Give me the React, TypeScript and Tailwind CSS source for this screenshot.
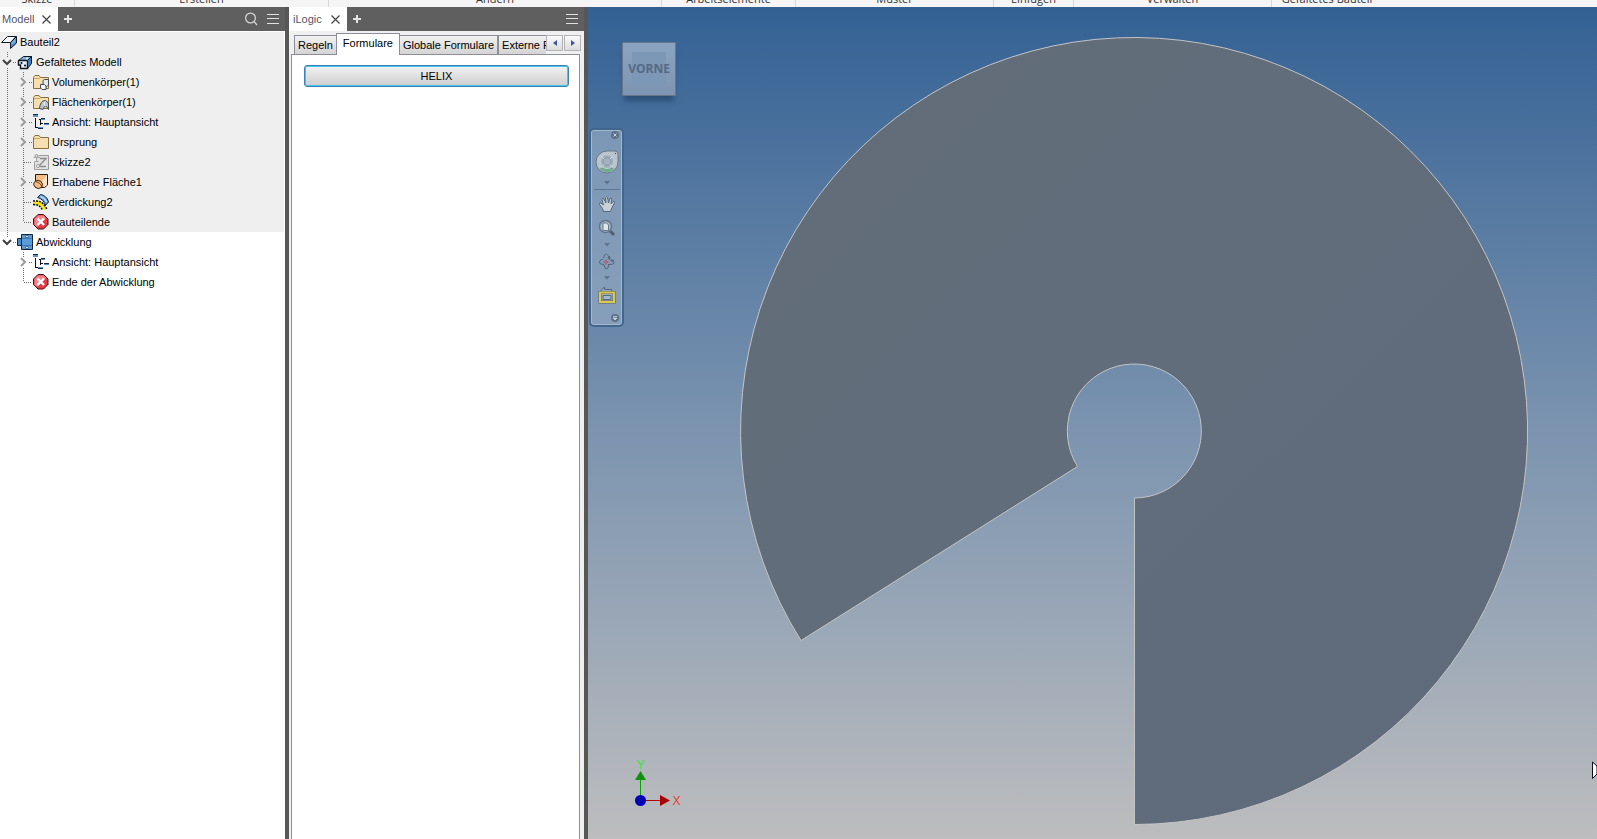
import React, { useState } from 'react';

type IconName =
  | 'part'
  | 'folded'
  | 'solids'
  | 'surfaces'
  | 'view'
  | 'folder'
  | 'sketch'
  | 'emboss'
  | 'thicken'
  | 'end'
  | 'flat';

interface TreeNode {
  id: string;
  label: string;
  icon: IconName;
  depth: number;
  toggle?: 'open' | 'closed';
  last?: boolean;
  trunk?: boolean;
}

const foldedNodes: TreeNode[] = [
  { id: 'part', label: 'Bauteil2', icon: 'part', depth: 0 },
  { id: 'folded', label: 'Gefaltetes Modell', icon: 'folded', depth: 1, toggle: 'open' },
  { id: 'solids', label: 'Volumenkörper(1)', icon: 'solids', depth: 2, toggle: 'closed', trunk: true },
  { id: 'surfaces', label: 'Flächenkörper(1)', icon: 'surfaces', depth: 2, toggle: 'closed', trunk: true },
  { id: 'view', label: 'Ansicht: Hauptansicht', icon: 'view', depth: 2, toggle: 'closed', trunk: true },
  { id: 'origin', label: 'Ursprung', icon: 'folder', depth: 2, toggle: 'closed', trunk: true },
  { id: 'sketch', label: 'Skizze2', icon: 'sketch', depth: 2, trunk: true },
  { id: 'emboss', label: 'Erhabene Fläche1', icon: 'emboss', depth: 2, toggle: 'closed', trunk: true },
  { id: 'thicken', label: 'Verdickung2', icon: 'thicken', depth: 2, trunk: true },
  { id: 'end', label: 'Bauteilende', icon: 'end', depth: 2, last: true, trunk: true },
];

const flatNodes: TreeNode[] = [
  { id: 'flat', label: 'Abwicklung', icon: 'flat', depth: 1, toggle: 'open', last: true },
  { id: 'flat-view', label: 'Ansicht: Hauptansicht', icon: 'view', depth: 2, toggle: 'closed' },
  { id: 'flat-end', label: 'Ende der Abwicklung', icon: 'end', depth: 2, last: true },
];

const ribbonGroups = [
  { label: 'Skizze', width: 'w-[75px]' },
  { label: 'Erstellen', width: 'w-[254px]' },
  { label: 'Ändern', width: 'w-[333px]' },
  { label: 'Arbeitselemente', width: 'w-[134px]' },
  { label: 'Muster', width: 'w-[198px]' },
  { label: 'Einfügen', width: 'w-[80px]' },
  { label: 'Verwalten', width: 'w-[198px]' },
  { label: 'Gefaltetes Bauteil', width: 'w-[110px]' },
];

const tabs = ['Regeln', 'Formulare', 'Globale Formulare', 'Externe Regeln'];

function Folder() {
  return (
    <>
      <path d="M.5 14.500V3.500L2 1.500H6L7.500 3.500H15.500V14.500Z" fill="#f6dfae" stroke="#8a6d3f" />
      <path d="M1 4.500H7" stroke="#c9a86c" fill="none" />
    </>
  );
}

function TreeIcon({ name }: { name: IconName }) {
  return (
    <svg width="16" height="16" viewBox="0 0 16 16" className="shrink-0" fill="none">
      {name === 'part' && (
        <>
          <path d="M.5 8.500 6.500 2.500H15L9.500 8.500Z" fill="#f4f8fc" stroke="#111c2c" />
          <path d="M15.500 2.500V9L9.500 14.500V8.500Z" fill="#4b86c4" stroke="#111c2c" />
          <path d="M10.500 8.500 14.500 4.500V7.500L10.500 11.500Z" fill="#7db0e2" />
        </>
      )}
      {name === 'folded' && (
        <>
          <path d="M1.500 6.500 6.500 2.500H14.500L10.500 6.500Z" fill="#7fb2e4" stroke="#101820" />
          <path d="M1.500 6.500H10.500V14.500H3.500V11H1.500Z" fill="#e6f0fa" stroke="#101820" strokeWidth="1.400" />
          <path d="M10.500 6.500 14.500 2.500V9.500L10.500 14.500Z" fill="#3f7dbd" stroke="#101820" />
          <circle cx="4.500" cy="9" r="1.100" fill="#101820" />
          <circle cx="8" cy="11.500" r="1.100" fill="#101820" />
          <circle cx="10" cy="4.500" r="1" fill="#fff" />
        </>
      )}
      {name === 'solids' && (
        <>
          <Folder />
          <path d="M10 6.500 11.500 5.500H15.500V11L14 12.500H10Z" fill="#e4e9f0" stroke="#444c5a" />
          <path d="M7.500 10.500H11.500L13 12V15.500H9L7.500 14Z" fill="#f7f8fa" stroke="#444c5a" />
        </>
      )}
      {name === 'surfaces' && (
        <>
          <Folder />
          <path d="M6.500 14.500C7 10 8.500 6.500 12.500 6.500L15.500 9V15.500L13.500 12.500C11.500 12 10.500 13.500 10 15.500Z" fill="#bcc4d0" stroke="#444c5a" />
          <path d="M12.500 7.500C10.500 9 11 11 12.500 12" stroke="#fff" />
        </>
      )}
      {name === 'view' && (
        <g shapeRendering="crispEdges">
          <path d="M2.500 4V13.500H5M7.500 5V10.500M6 5.500H11M7.500 9.500H10" stroke="#111" />
          <path d="M0 1H5V3H0ZM8 4H12V6H8ZM11 9H16V11H11ZM5 13H10V15H5Z" fill="#5790cb" />
          <path d="M0 .5H5M8 4.500H12M11 9.500H16M5 14.500H10" stroke="#162c48" />
        </g>
      )}
      {name === 'folder' && <Folder />}
      {name === 'sketch' && (
        <>
          <path d="M5.500 1.500H15.500V15.500H1.500V8" fill="#e2e2e2" stroke="#9b9b9b" />
          <path d="M7 4.500H13L5.500 12.500H13" stroke="#8d8d8d" strokeWidth="1.400" />
          <path d="M3.500 0V7M.5 3.500H7M1.500 7.500H5.500" stroke="#a7a7a7" />
          <circle cx="3.500" cy="2" r="1.500" fill="#ddd" stroke="#999" />
          <circle cx="5" cy="12" r="1.500" fill="#fff" stroke="#999" />
        </>
      )}
      {name === 'emboss' && (
        <>
          <path d="M2.500 .5H14.500V11L11.500 13.500H2.500Z" fill="#f9bd83" stroke="#2a1a0c" />
          <path d="M9 7 14 1V11L11 13Z" fill="#fde3c6" />
          <path d="M1 8.500Q4 5 7.500 7Q11 10 8.500 13.500Q5 16 2 13Q0 11 1 8.500Z" fill="#f6b982" stroke="#3b2816" />
          <path d="M2 7.500C5.500 8 8 10 9 13" stroke="#6a4122" />
        </>
      )}
      {name === 'thicken' && (
        <>
          <path d="M0 6.500H4.500C9 7.500 12.500 11 14 15.500H9.500C8.500 12.500 6 10.500 0 10.500Z" fill="#f6e21d" />
          <path d="M0 7H4C9 7.500 12.500 11.500 14 15.500M0 10.500C5 10.500 8 12.500 9 15.500" stroke="#111" strokeDasharray="2 1" strokeWidth="1.500" />
          <path d="M4.500 3.500 7.500 .5C11 1 14.500 3.500 15.500 8L12.500 11.500C11.500 7.500 8.500 4.500 4.500 3.500Z" fill="#5d98d6" stroke="#14283f" />
          <path d="M7.500 2.500C10.500 3.500 12.500 5.500 13.500 8.500" stroke="#c6e1fa" strokeWidth="1.500" />
        </>
      )}
      {name === 'end' && (
        <>
          <path d="M5 .5H10.500L15 5V10.500L10.500 15H5L.5 10.500V5Z" fill="#e23b43" stroke="#4a0d12" />
          <path d="M5 1.500H10.500L13 4 4 13 1.500 10.500V5Z" fill="#f5848a" />
          <path d="M4.500 4.500 11 11M11 4.500 4.500 11" stroke="#fff" strokeWidth="2.400" />
        </>
      )}
      {name === 'flat' && (
        <>
          <path d="M.5 4.500H5V11.500H.5Z" fill="#4a8aca" stroke="#10243c" />
          <path d="M4.500 .5H15.500V15.500H4.500Z" fill="#5b9bd9" stroke="#10243c" />
          <path d="M5 4.500H15M5 11.500H15" stroke="#3d77b2" />
          <ellipse cx="10" cy="2.500" rx="1.500" ry="1" fill="#fff" stroke="#10243c" strokeWidth=".6" />
          <ellipse cx="10" cy="13.500" rx="1.500" ry="1" fill="#fff" stroke="#10243c" strokeWidth=".6" />
        </>
      )}
    </svg>
  );
}

interface GuideProps {
  up?: boolean;
  down?: boolean;
  stub?: boolean;
  toggle?: 'open' | 'closed';
}

function Guide({ up, down, stub, toggle }: GuideProps) {
  return (
    <svg width="16" height="20" viewBox="0 0 16 20" fill="none" className="block shrink-0">
      <g stroke="#6e6e6e" strokeDasharray="1 1" shapeRendering="crispEdges">
        {up && <path d={toggle ? 'M6.500 0V5' : 'M6.500 0V10'} />}
        {down && <path d={toggle ? 'M6.500 16V20' : 'M6.500 10V20'} />}
        {stub && <path d={toggle ? 'M12 10.500H15' : 'M7 10.500H15'} />}
      </g>
      {toggle === 'open' && <path d="M2 8 6 12 10 8" stroke="#404040" strokeWidth="2" />}
      {toggle === 'closed' && <path d="M4 6 8 10 4 14" stroke="#9b9b9b" strokeWidth="2" />}
    </svg>
  );
}

function TreeRow({ node }: { node: TreeNode }) {
  const guide = <Guide up down={!node.last} stub toggle={node.toggle} />;
  return (
    <li role="treeitem" className="flex h-5 items-center pl-px whitespace-nowrap">
      {node.depth === 2 && <Guide up={node.trunk} down={node.trunk} />}
      {node.depth > 0 &&
        (node.toggle ? (
          <button type="button" aria-label={`${node.label} umschalten`}>
            {guide}
          </button>
        ) : (
          guide
        ))}
      <TreeIcon name={node.icon} />
      <span className="pl-[3px]">{node.label}</span>
    </li>
  );
}

function PanelHeader({ title, search }: { title: string; search?: boolean }) {
  return (
    <div className="flex h-6 shrink-0 items-stretch bg-[#5f5f5f]">
      <div className={`flex items-center bg-white pr-[6px] text-[#555568] ${search ? 'gap-[7px] pl-[2px]' : 'gap-2 pl-1'}`}>
        <span>{title}</span>
        <button type="button" aria-label={`${title} schließen`}>
          <svg width="11" height="11" viewBox="0 0 11 11" stroke="#444" strokeWidth="1.200">
            <path d="M1.500 1.500 9.500 9.500M9.500 1.500 1.500 9.500" />
          </svg>
        </button>
      </div>
      <button type="button" aria-label="Hinzufügen" className="px-[6px]">
        <svg width="8" height="8" viewBox="0 0 8 8" stroke="#e4e4e4" strokeWidth="2">
          <path d="M4 0V8M0 4H8" />
        </svg>
      </button>
      <div className="ml-auto flex items-center gap-[9px] pr-[6px]">
        {search && (
          <button type="button" aria-label="Suchen">
            <svg width="14" height="14" viewBox="0 0 14 14" fill="none" stroke="#d8d8d8" strokeWidth="1.200">
              <circle cx="6.500" cy="6" r="4.900" />
              <path d="M10 9.500 13 13" />
            </svg>
          </button>
        )}
        <button type="button" aria-label="Menü">
          <svg width="12" height="10" viewBox="0 0 12 10" stroke="#e0e0e0" shapeRendering="crispEdges">
            <path d="M0 .5H12M0 4.500H12M0 9.500H12" />
          </svg>
        </button>
      </div>
    </div>
  );
}

function ModelPanel() {
  return (
    <aside className="flex w-[289px] shrink-0 flex-col border-r-4 border-[#575757] bg-white">
      <PanelHeader title="Modell" search />
      <ul role="tree" className="mt-px mr-px bg-[#efefef]">
        {foldedNodes.map((node) => (
          <TreeRow key={node.id} node={node} />
        ))}
      </ul>
      <ul role="tree">
        {flatNodes.map((node) => (
          <TreeRow key={node.id} node={node} />
        ))}
      </ul>
    </aside>
  );
}

function LogicPanel() {
  const [activeTab, setActiveTab] = useState('Formulare');

  return (
    <aside className="flex w-[299px] shrink-0 flex-col border-r-4 border-[#575757] bg-[#f0f0f0]">
      <PanelHeader title="iLogic" />
      <div className="flex min-h-0 flex-1 flex-col px-[2px] pt-[2px]">
        <div className="flex h-[21px] items-end">
          <div role="tablist" className="-mb-px flex h-[22px] min-w-0 flex-1 items-end overflow-hidden pb-px pl-[3px] whitespace-nowrap">
            {tabs.map((tab) => (
              <button
                key={tab}
                type="button"
                role="tab"
                aria-selected={activeTab === tab}
                onClick={() => setActiveTab(tab)}
                className={
                  activeTab === tab
                    ? 'relative z-10 -mx-px -mb-px h-[22px] shrink-0 border border-b-0 border-[#8c8e99] bg-white px-[6px] pb-1'
                    : 'h-[19px] shrink-0 border border-b-0 border-[#8c8e99] bg-linear-to-b from-[#f2f2f2] to-[#d4d4d4] px-[3px]'
                }
              >
                {tab}
              </button>
            ))}
          </div>
          <div className="flex h-[19px] gap-px pr-px">
            <button type="button" aria-label="Zurück" className="flex h-4 w-[17px] items-center justify-center border border-[#b4b4b8] bg-linear-to-b from-[#fafafa] to-[#dcdcdc]">
              <svg width="4" height="6" viewBox="0 0 4 6" fill="#3f55a0">
                <path d="M4 0V6L0 3Z" />
              </svg>
            </button>
            <button type="button" aria-label="Weiter" className="flex h-4 w-[17px] items-center justify-center border border-[#b4b4b8] bg-linear-to-b from-[#fafafa] to-[#dcdcdc]">
              <svg width="4" height="6" viewBox="0 0 4 6" fill="#3f55a0">
                <path d="M0 0V6L4 3Z" />
              </svg>
            </button>
          </div>
        </div>
        <div className="mr-[2px] flex-1 border border-b-0 border-[#8c8e99] bg-white px-3 pt-[10px] pr-[10px]">
          <button
            type="button"
            className="h-[22px] w-full rounded-[3px] border border-[#3c7fb1] bg-linear-to-b from-[#f3f3f3] to-[#cecece] text-black inset-ring inset-ring-[#46c5ee]"
          >
            HELIX
          </button>
        </div>
      </div>
    </aside>
  );
}

function DropArrow() {
  return (
    <svg width="6" height="4" viewBox="0 0 6 4" fill="#5f7489">
      <path d="M0 0H6L3 3.500Z" />
    </svg>
  );
}

function NavigationBar() {
  return (
    <div className="absolute top-[121px] left-px flex w-[35px] flex-col items-center rounded-[5px] border-2 border-[#41678f] bg-[#93a8c0]/70 inset-ring inset-ring-[#a3b8ce]">
      <button type="button" aria-label="Navigationsleiste schließen" className="mt-[1px] self-end pr-[3px]">
        <svg width="8" height="8" viewBox="0 0 8 8">
          <circle cx="4" cy="4" r="4" fill="#5c7288" />
          <path d="M2.500 2.500 5.500 5.500M5.500 2.500 2.500 5.500" stroke="#c5d2de" />
        </svg>
      </button>
      <button type="button" aria-label="Navigationsrad" className="mt-[11px]">
        <svg width="24" height="24" viewBox="0 0 24 24" fill="none">
          <path d="M12 1H20Q23 1 23 4V12A11 11 0 1 1 12 1Z" fill="#b9c4cd" stroke="#68798c" />
          <path d="M4.500 18.500Q12 15 19.500 18.500Q12 26 4.500 18.500Z" fill="#6fae8c" />
          <circle cx="12" cy="11.500" r="7" fill="#a3b2bf" stroke="#c4ced6" />
          <circle cx="12" cy="11.500" r="4" stroke="#8797a8" />
          <path d="M6.500 6.500 9 9M17.500 6.500 15 9M6.500 17 9 14.500M17.500 17 15 14.500" stroke="#d0d8df" />
          <path d="M20 3H21V4H20Z" fill="#34495e" />
        </svg>
      </button>
      <button type="button" aria-label="Radoptionen" className="mt-[7px] h-1">
        <DropArrow />
      </button>
      <hr className="mt-1 w-[26px] border-[#5d7894]" />
      <button type="button" aria-label="Pan" className="mt-[5px]">
        <svg width="18" height="18" viewBox="0 0 18 18">
          <path d="M5.500 16.500 4.500 13.500 1.500 9.500Q1 7.500 3 8L5.500 10 4 4.500Q4.200 2.800 5.700 3.700L8 8 7.500 2.500Q8.300 .8 9.500 2.500L10.500 8 12 3.500Q13.500 2.500 13.700 4.200L13 9 15 6.500Q16.700 6 16.500 7.800L14 12.500 12.500 16.500Z" fill="#c9d1d8" stroke="#52677c" />
        </svg>
      </button>
      <button type="button" aria-label="Zoom" className="mt-[6px]">
        <svg width="18" height="18" viewBox="0 0 18 18" fill="none">
          <path d="M11 11 16 16" stroke="#53616e" strokeWidth="3" />
          <circle cx="7.500" cy="7.500" r="6" fill="#a7b9ca" stroke="#61758a" strokeWidth="1.500" />
          <path d="M5 4H8.500L10.500 6V11.500H5Z" fill="#e1e6ea" stroke="#62768b" />
        </svg>
      </button>
      <button type="button" aria-label="Zoomoptionen" className="mt-[6px] h-1">
        <DropArrow />
      </button>
      <button type="button" aria-label="Orbit" className="mt-[6px]">
        <svg width="18" height="18" viewBox="0 0 18 18" fill="none" stroke="#53687e">
          <path d="M5 6.500H3.500Q1 7.500 1.500 10Q2.500 11.500 6 11.500M13 7Q16.500 8 16 10Q15 12 10 11.500" />
          <path d="M5.500 5Q6 1 8.500 1Q11 2 11 6M6 12Q7 16.500 9 16Q10.500 15.500 10.500 12" />
          <path d="M11.500 3V7M9.500 5H13M14 6V9M12.500 7.500H16" />
          <path d="M8 6.500V11.500M5.500 9H10.500" stroke="#c23a4e" strokeDasharray="2 1" />
        </svg>
      </button>
      <button type="button" aria-label="Orbitoptionen" className="mt-[5px] h-1">
        <DropArrow />
      </button>
      <button type="button" aria-label="Ausrichten nach" className="mt-[6px]">
        <svg width="18" height="18" viewBox="0 0 18 18" fill="none">
          <path d="M2 5.500 6.500 1V3.500H13.500V5.500" fill="#9eb1c2" stroke="#4e6378" />
          <path d="M2 6.500H16V16H2Z" fill="#9fb2c4" stroke="#63624d" strokeWidth="3" />
          <path d="M2 6.500H16V16H2Z" stroke="#d9c955" strokeWidth="2" />
          <path d="M5 9.500H13V13.500H5Z" fill="#a8b9c9" stroke="#55697c" />
        </svg>
      </button>
      <button type="button" aria-label="Leiste anpassen" className="mt-[10px] mb-[3px] self-end pr-[3px]">
        <svg width="8" height="8" viewBox="0 0 8 8">
          <circle cx="4" cy="4" r="4" fill="#5c7288" />
          <path d="M2 2.500H6M2 4H6L4 6Z" stroke="#c5d2de" strokeWidth=".8" fill="#c5d2de" />
        </svg>
      </button>
    </div>
  );
}

function Viewport() {
  return (
    <main className="relative min-w-0 flex-1 overflow-hidden bg-linear-to-b from-[#336194] via-[#7a93af] to-[#bdbdbe]">
      <svg viewBox="0 0 1009 832" className="absolute inset-0 h-full w-full" fill="none">
        <defs>
          <linearGradient id="sheet" x1="0" y1="0" x2="1" y2="1">
            <stop offset="0" stopColor="#636d79" />
            <stop offset=".5" stopColor="#616d7b" />
            <stop offset="1" stopColor="#5f6a7b" />
          </linearGradient>
        </defs>
        <path
          d="M546.500 817.500A393.500 393.500 0 1 0 213 633.500L489.500 459.500A67 67 0 1 1 546.500 491Z"
          fill="url(#sheet)"
          stroke="#c4c4c4"
        />
        <g transform="translate(52 793)">
          <path d="M.5 0V-25" stroke="#00a800" />
          <path d="M.5-29 6-20H-5Z" fill="#109010" />
          <path d="M0 .5H22" stroke="#b00000" />
          <path d="M20-5V6L30 .5Z" fill="#a80000" />
          <circle cx="0.500" cy="0.500" r="5.500" fill="#0000c0" />
          <path d="M-1.500-1.500H2L-1.500 2.500H2" stroke="#000070" />
        </g>
        <g fontFamily="Liberation Sans, sans-serif" fontSize="12" textAnchor="middle">
          <text x="52.500" y="762" fill="#33e833">Y</text>
          <text x="88.500" y="798" fill="#ec3a3a">X</text>
        </g>
        <path d="M1004.500 755V771.500L1009 767V759Z" fill="#fff" stroke="#0a0a1e" />
      </svg>
      <button
        type="button"
        className="absolute top-[35px] left-[34px] flex h-[54px] w-[54px] items-center justify-center border border-[#67768a] bg-linear-to-b from-[#8aa4c2] to-[#7d95b0] shadow-[0_7px_5px_-2px_#2c5078]"
      >
        <span className="flex h-[34px] w-[34px] items-center justify-center bg-[#7d97b6] font-['Open_Sans',sans-serif] text-xs font-bold text-[#566a83]">
          VORNE
        </span>
      </button>
      <NavigationBar />
    </main>
  );
}

export default function App() {
  return (
    <div className="flex h-screen flex-col overflow-hidden bg-white font-['Liberation_Sans',Arial,sans-serif] text-[11px] leading-4 text-black">
      <header className="flex h-[7px] shrink-0 items-end overflow-hidden bg-[#f5f5f5] font-['Open_Sans',sans-serif] text-[#333]">
        {ribbonGroups.map((group, i) => (
          <div
            key={group.label}
            className={`${group.width} shrink-0 text-center whitespace-nowrap ${
              i < ribbonGroups.length - 1 ? 'border-r border-[#d8d8d8]' : ''
            }`}
          >
            {group.label}
          </div>
        ))}
      </header>
      <div className="flex min-h-0 flex-1">
        <ModelPanel />
        <LogicPanel />
        <Viewport />
      </div>
    </div>
  );
}
